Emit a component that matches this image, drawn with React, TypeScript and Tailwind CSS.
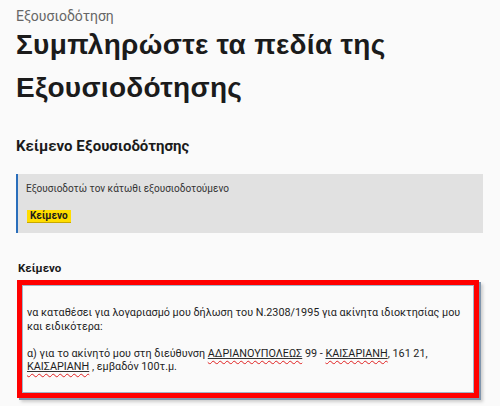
import React from "react";

const Err = ({ children }: { children: React.ReactNode }) => (
  <span className="underline decoration-wavy decoration-[#e02020] decoration-1 underline-offset-[3px]">
    <span className="underline decoration-[#333] decoration-1 underline-offset-[1px]">{children}</span>
  </span>
);

export default function App() {
  return (
    <div
      className="w-[500px] h-[406px] overflow-hidden bg-[#fafafa] text-[#1b1b1b] pl-4 pr-[17px]"
      style={{ fontFamily: "Roboto, 'Liberation Sans', sans-serif" }}
    >
      <div className="pt-[7px] text-[14px] leading-[18px] text-[#666]">Εξουσιοδότηση</div>
      <h1
        className="mt-[-2px] text-[28px] leading-[43px] font-bold tracking-[0.3px]"
        style={{ fontFamily: "'Liberation Sans', Arial, sans-serif" }}
      >
        Συμπληρώστε τα πεδία της Εξουσιοδότησης
      </h1>
      <h2 className="mt-[27px] text-[15px] leading-[20px] font-bold">Κείμενο Εξουσιοδότησης</h2>
      <div className="mt-[18px] bg-[#e1e1e1] border-l-2 border-[#2a6ebb] h-[59px] pl-[8px] pt-[8px]">
        <div className="text-[10px] leading-[13px] text-[#333]">Εξουσιοδοτώ τον κάτωθι εξουσιοδοτούμενο</div>
        <div className="mt-[15px] pl-[1px] flex">
          <span className="bg-[#ffdd00] px-[3px] text-[10px] leading-[12px] font-bold border-b border-[#c8a800]">
            Κείμενο
          </span>
        </div>
      </div>
      <div className="mt-[28px] pl-[2px] text-[11.5px] leading-[14px] font-bold">Κείμενο</div>
      <div className="mt-[5px] ml-[1px] w-[462px] h-[118px] border-[5px] border-[#ff0000] shadow-[2px_2px_0_#7f95ad,4px_4px_3px_rgba(0,0,0,0.18)]">
        <div className="h-full border border-[#9fb4c8] bg-[#fafafa] pl-[4px] pt-[20px] text-[10.8px] leading-[13.5px] text-[#1e1e1e]">
          <div>να καταθέσει για λογαριασμό μου δήλωση του Ν.2308/1995 για ακίνητα ιδιοκτησίας μου και ειδικότερα:</div>
          <div className="h-[13.5px]" />
          <div>
            α) για το ακίνητό μου στη διεύθυνση <Err>ΑΔΡΙΑΝΟΥΠΟΛΕΩΣ</Err> 99 - <Err>ΚΑΙΣΑΡΙΑΝΗ</Err>, 161 21,{" "}
            <Err>ΚΑΙΣΑΡΙΑΝΗ</Err> , εμβαδόν 100τ.μ.
          </div>
        </div>
      </div>
    </div>
  );
}
